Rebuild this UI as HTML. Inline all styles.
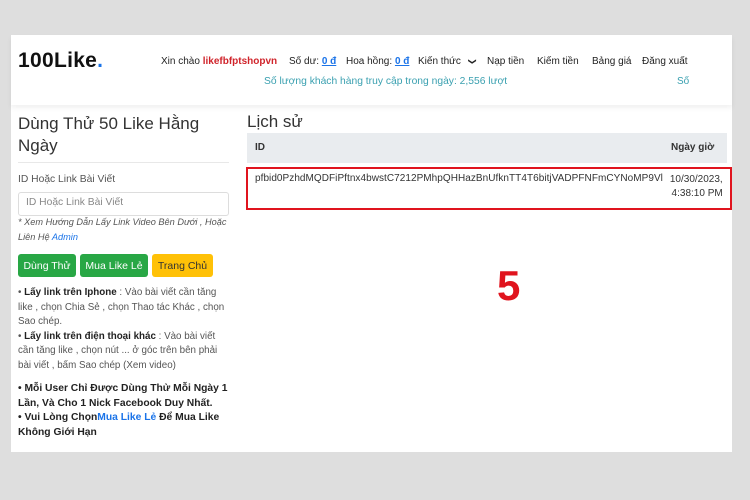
<!DOCTYPE html>
<html><head><meta charset="utf-8"><style>
body{margin:0;width:750px;height:500px;background:#dedede;font-family:"Liberation Sans","Noto Sans CJK SC",sans-serif;position:relative;overflow:hidden;color:#333}
.a{position:absolute;white-space:nowrap}
.panel{position:absolute;left:11px;top:35px;width:721px;height:417px;background:#fff}
.hdr{position:absolute;left:11px;top:35px;width:721px;height:70px;background:#fff;box-shadow:0 3px 5px rgba(0,0,0,.06)}
.nav{font-size:10px;color:#222}
.btn{position:absolute;top:254px;height:23px;line-height:24px;font-size:10.5px;color:#fff;border-radius:3px;text-align:center}
.t{font-size:9.8px;color:#555;line-height:14.5px;position:absolute;left:18px;white-space:nowrap}
b{color:#222}
</style></head><body>
<div class="panel"></div>
<div class="hdr"></div>
<div class="a" style="left:18px;top:49px;font-size:21px;font-weight:bold;color:#111;letter-spacing:.3px">100Like<span style="color:#1a73e8">.</span></div>
<div class="a nav" style="left:161px;top:56px">Xin chào <b style="color:#d0242b">likefbfptshopvn</b></div>
<div class="a nav" style="left:289px;top:56px">Số dư: <b style="color:#1a73e8;text-decoration:underline">0 đ</b></div>
<div class="a nav" style="left:346px;top:56px">Hoa hồng: <b style="color:#1a73e8;text-decoration:underline">0 đ</b></div>
<div class="a nav" style="left:418px;top:56px">Kiến thức &nbsp;&nbsp;<span style="font-size:8px;display:inline-block;transform:rotate(90deg)">❯</span></div>
<div class="a nav" style="left:487px;top:56px">Nạp tiền</div>
<div class="a nav" style="left:537px;top:56px">Kiếm tiền</div>
<div class="a nav" style="left:592px;top:56px">Bảng giá</div>
<div class="a nav" style="left:642px;top:56px">Đăng xuất</div>
<div class="a" style="left:264px;top:76px;font-size:10.3px;color:#3aa0b0">Số lượng khách hàng truy cập trong ngày: 2,556 lượt</div>
<div class="a" style="left:677px;top:76px;font-size:10px;color:#3aa0b0">Số</div>
<div class="a" style="left:18px;top:113px;font-size:17px;color:#333;line-height:22px">Dùng Thử 50 Like Hằng<br>Ngày</div>
<div class="a" style="left:18px;top:162px;width:211px;border-top:1px solid #e8e8e8"></div>
<div class="a" style="left:18px;top:174px;font-size:10.3px;color:#555">ID Hoặc Link Bài Viết</div>
<div class="a" style="left:18px;top:192px;width:209px;height:22px;border:1px solid #ddd;border-radius:3px"></div>
<div class="a" style="left:26px;top:197px;font-size:10.3px;color:#888">ID Hoặc Link Bài Viết</div>
<div class="t" style="top:215px;font-style:italic;font-size:9.2px">* Xem Hướng Dẫn Lấy Link Video Bên Dưới , Hoặc<br>Liên Hệ <span style="color:#1a73e8">Admin</span></div>
<div class="btn" style="left:18px;width:58px;background:#28a745">Dùng Thử</div>
<div class="btn" style="left:80px;width:68px;background:#28a745">Mua Like Lẻ</div>
<div class="btn" style="left:152px;width:61px;background:#ffc107;color:#333">Trang Chủ</div>
<div class="t" style="top:286px">• <b>Lấy link trên Iphone</b> : Vào bài viết cần tăng<br>like , chọn Chia Sẻ , chọn Thao tác Khác , chọn<br>Sao chép.<br>• <b>Lấy link trên điện thoại khác</b> : Vào bài viết<br>cần tăng like , chọn nút ... ở góc trên bên phải<br>bài viết , bấm Sao chép (Xem video)</div>
<div class="t" style="top:382px;font-weight:bold;color:#222;font-size:10.3px">• Mỗi User Chỉ Được Dùng Thử Mỗi Ngày 1<br>Lần, Và Cho 1 Nick Facebook Duy Nhất.<br>• Vui Lòng Chọn<span style="color:#1a73e8">Mua Like Lẻ</span> Để Mua Like<br>Không Giới Hạn</div>
<div class="a" style="left:247px;top:112px;font-size:17px;color:#333">Lịch sử</div>
<div class="a" style="left:247px;top:133px;width:480px;height:30px;background:#e9ecef"></div>
<div class="a" style="left:255px;top:142px;font-size:10px;font-weight:bold;color:#333">ID</div>
<div class="a" style="left:671px;top:142px;font-size:10px;font-weight:bold;color:#333">Ngày giờ</div>
<div class="a" style="left:246px;top:167px;width:482px;height:39px;border:2px solid #e0141e"></div>
<div class="a" style="left:255px;top:173px;font-size:10px;color:#333;letter-spacing:.05px">pfbid0PzhdMQDFiPftnx4bwstC7212PMhpQHHazBnUfknTT4T6bitjVADPFNFmCYNoMP9Vl</div>
<div class="a" style="left:666px;top:173px;font-size:10px;color:#333;text-align:right;line-height:14px">10/30/2023,<br>&nbsp;&nbsp;4:38:10 PM</div>
<div class="a" style="left:497px;top:262px;font-size:42px;font-weight:bold;color:#e0141e">5</div>
</body></html>
